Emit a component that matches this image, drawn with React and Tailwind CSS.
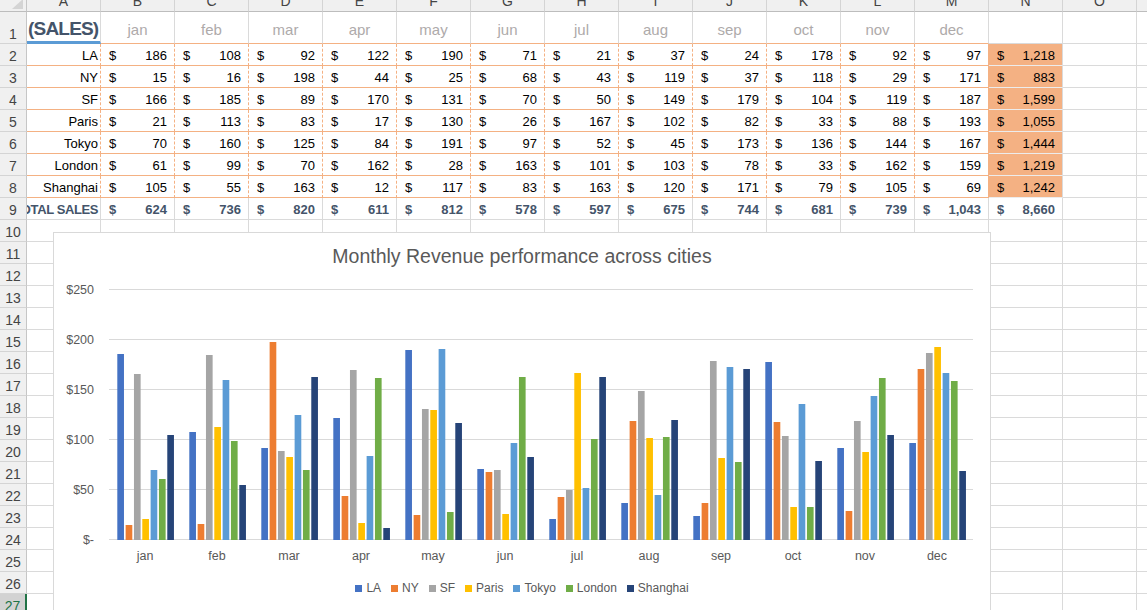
import React from 'react'

const MONTHS = ['jan', 'feb', 'mar', 'apr', 'may', 'jun', 'jul', 'aug', 'sep', 'oct', 'nov', 'dec']

const CITIES = [
  { name: 'LA', color: '#4472c4', swatch: 'bg-[#4472c4]', sales: [186, 108, 92, 122, 190, 71, 21, 37, 24, 178, 92, 97] },
  { name: 'NY', color: '#ed7d31', swatch: 'bg-[#ed7d31]', sales: [15, 16, 198, 44, 25, 68, 43, 119, 37, 118, 29, 171] },
  { name: 'SF', color: '#a5a5a5', swatch: 'bg-[#a5a5a5]', sales: [166, 185, 89, 170, 131, 70, 50, 149, 179, 104, 119, 187] },
  { name: 'Paris', color: '#ffc000', swatch: 'bg-[#ffc000]', sales: [21, 113, 83, 17, 130, 26, 167, 102, 82, 33, 88, 193] },
  { name: 'Tokyo', color: '#5b9bd5', swatch: 'bg-[#5b9bd5]', sales: [70, 160, 125, 84, 191, 97, 52, 45, 173, 136, 144, 167] },
  { name: 'London', color: '#70ad47', swatch: 'bg-[#70ad47]', sales: [61, 99, 70, 162, 28, 163, 101, 103, 78, 33, 162, 159] },
  { name: 'Shanghai', color: '#264478', swatch: 'bg-[#264478]', sales: [105, 55, 163, 12, 117, 83, 163, 120, 171, 79, 105, 69] },
]

const COLUMNS = 'ABCDEFGHIJKLMNO'.split('')
const fmt = n => n.toLocaleString('en-US')
const sum = arr => arr.reduce((a, b) => a + b, 0)
const monthTotals = MONTHS.map((_, i) => sum(CITIES.map(c => c.sales[i])))

const cellBase = 'w-[74px] shrink-0 flex items-end leading-[16px] text-[13px] whitespace-nowrap'
const plainCell = `${cellBase} border-r border-b border-[#dadada]`
const bandCell = `${cellBase} border-r [border-right-style:dashed] border-r-[#f4b183] border-b border-b-[#f4b183]`

function Row({ n, tall, active, children }) {
  return (
    <div className={`flex shrink-0 ${tall ? 'h-[32px]' : 'h-[22px]'}`}>
      <div
        className={`w-[27px] shrink-0 flex items-end justify-center pb-[1px] text-[14px] leading-[16px] border-b border-b-[#d4d4d4] ${
          active ? 'bg-[#d2d2d2] text-[#217346] border-r-2 border-r-[#217346]' : 'bg-[#f0f0f0] text-[#444] border-r border-r-[#c6c6c6]'
        }`}
      >
        {n}
      </div>
      {children}
      <div className="flex-1 border-b border-[#dadada]" />
    </div>
  )
}

function Money({ value, className }) {
  return (
    <div className={`${className} pl-[8px] pr-[7px] pb-[1px]`}>
      <span>$</span>
      <span className="ml-auto">{fmt(value)}</span>
    </div>
  )
}

function HeaderRow() {
  return (
    <div className="flex h-[21px] shrink-0 -mt-[9px] bg-[#f0f0f0] text-[14px] text-[#444]">
      <div className="w-[27px] shrink-0 border-r border-r-[#c6c6c6] border-b border-b-[#bdbdbd]">
        <svg width="26" height="20" className="block">
          <polygon points="23,8 23,18 12,18" fill="#d4d4d4" />
        </svg>
      </div>
      {COLUMNS.map(c => (
        <div key={c} className="w-[74px] shrink-0 flex items-center justify-center border-r border-r-[#d4d4d4] border-b border-b-[#bdbdbd]">
          {c}
        </div>
      ))}
      <div className="flex-1 border-b border-b-[#bdbdbd]" />
    </div>
  )
}

function Sheet() {
  const emptyRows = Array.from({ length: 18 }, (_, i) => i + 10)
  return (
    <div className="flex flex-col">
      <HeaderRow />

      <Row n={1} tall>
        <div className={`${cellBase} border-r border-r-[#dadada] border-b-[3px] border-b-[#5b9bd5] pb-[1px] pl-[1px] text-[19px] leading-[22px] font-bold text-[#44546a] tracking-[-0.8px]`}>
          (SALES)
        </div>
        {MONTHS.map(m => (
          <div key={m} className={`${cellBase} border-r border-r-[#dadada] border-b border-b-[#f4b183] justify-center pb-[3px] text-[15px] leading-[20px] text-[#aeaaaa]`}>
            {m}
          </div>
        ))}
        <div className={plainCell} />
        <div className={plainCell} />
      </Row>

      {CITIES.map((city, r) => (
        <Row key={city.name} n={r + 2}>
          <div className={`${bandCell} justify-end pr-[2px] pb-[1px] text-black`}>{city.name}</div>
          {city.sales.map((v, i) => (
            <Money
              key={i}
              value={v}
              className={i === 11 ? `${cellBase} border-r border-r-[#f4b183] border-b border-b-[#f4b183] text-black` : `${bandCell} text-black`}
            />
          ))}
          <Money value={sum(city.sales)} className={`${cellBase} bg-[#f4b183] border-r border-r-[#dadada] border-b border-b-[#ececec] text-black`} />
          <div className={plainCell} />
        </Row>
      ))}

      <Row n={9}>
        <div className={`${plainCell} justify-end overflow-hidden pr-[2px] pb-[1px] font-bold text-[#44546a] tracking-[-0.4px]`}>
          <span className="shrink-0">TOTAL SALES</span>
        </div>
        {monthTotals.map((v, i) => (
          <Money key={i} value={v} className={`${plainCell} font-bold text-[#44546a]`} />
        ))}
        <Money value={sum(monthTotals)} className={`${plainCell} font-bold text-[#44546a]`} />
        <div className={plainCell} />
      </Row>

      {emptyRows.map(n => (
        <Row key={n} n={n} active={n === 27}>
          {COLUMNS.map(c => (
            <div key={c} className={plainCell} />
          ))}
        </Row>
      ))}
    </div>
  )
}

function Plot() {
  const zero = 269.5
  const ticks = [250, 200, 150, 100, 50, 0]
  return (
    <svg width="936" height="300" className="block shrink-0">
      {ticks.map(t => (
        <g key={t}>
          <line x1="55" x2="919" y1={zero - t} y2={zero - t} stroke="#d9d9d9" strokeWidth="1" />
          <text x="40" y={zero - t + 4.5} textAnchor="end" fontSize="12.5" fill="#595959">
            {t ? `$${t}` : '$-'}
          </text>
        </g>
      ))}
      {MONTHS.map((m, c) => (
        <g key={m}>
          {CITIES.map((city, k) => (
            <rect
              key={city.name}
              x={55 + 72 * c + 8.3 + k * 8.33}
              y={270 - city.sales[c]}
              width="6.67"
              height={city.sales[c]}
              fill={city.color}
            />
          ))}
          <text x={55 + 72 * c + 36} y="290" textAnchor="middle" fontSize="12.5" fill="#595959">
            {m}
          </text>
        </g>
      ))}
    </svg>
  )
}

function Chart() {
  return (
    <div className="absolute left-[53px] top-[232px] w-[938px] h-[400px] bg-white border border-[#d9d9d9] flex flex-col">
      <div className="mt-[11px] h-[26px] shrink-0 text-center text-[19.5px] leading-[24px] text-[#595959]">
        Monthly Revenue performance across cities
      </div>
      <Plot />
      <div className="mt-[11px] flex justify-center gap-[10px] text-[12px] leading-[14px] text-[#595959]">
        {CITIES.map(c => (
          <div key={c.name} className="flex items-center gap-[4px]">
            <span className={`w-[7px] h-[7px] ${c.swatch}`} />
            {c.name}
          </div>
        ))}
      </div>
    </div>
  )
}

export default function App() {
  return (
    <div className="relative w-[1147px] h-[610px] overflow-hidden bg-white font-['Liberation_Sans',Arial,sans-serif]">
      <Sheet />
      <Chart />
    </div>
  )
}
